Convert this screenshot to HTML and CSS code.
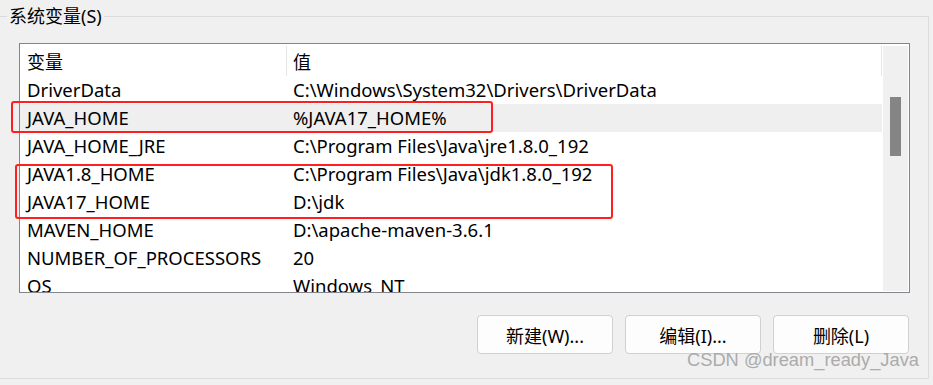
FILE: index.html
```html
<!DOCTYPE html>
<html lang="zh-CN">
<head>
<meta charset="utf-8">
<title>系统变量</title>
<link rel="stylesheet" href="styles.css">
</head>
<body>
<div class="window">
  <fieldset class="group">
    <legend class="group-title">系统变量(S)</legend>
    <div class="list">
      <div class="list-body">
        <div class="list-head">
          <div class="cell col-name head-cell">变量</div>
          <div class="cell col-value head-cell">值</div>
        </div>
        <div class="row"><div class="cell col-name">DriverData</div><div class="cell col-value">C:\Windows\System32\Drivers\DriverData</div></div>
        <div class="row selected"><div class="cell col-name">JAVA_HOME</div><div class="cell col-value">%JAVA17_HOME%</div></div>
        <div class="row"><div class="cell col-name">JAVA_HOME_JRE</div><div class="cell col-value">C:\Program Files\Java\jre1.8.0_192</div></div>
        <div class="row"><div class="cell col-name">JAVA1.8_HOME</div><div class="cell col-value">C:\Program Files\Java\jdk1.8.0_192</div></div>
        <div class="row"><div class="cell col-name">JAVA17_HOME</div><div class="cell col-value">D:\jdk</div></div>
        <div class="row"><div class="cell col-name">MAVEN_HOME</div><div class="cell col-value">D:\apache-maven-3.6.1</div></div>
        <div class="row"><div class="cell col-name">NUMBER_OF_PROCESSORS</div><div class="cell col-value">20</div></div>
        <div class="row"><div class="cell col-name">OS</div><div class="cell col-value">Windows_NT</div></div>
      </div>
      <div class="scrollbar"><div class="thumb"></div></div>
    </div>
    <div class="buttons">
      <button class="btn">新建(W)...</button>
      <button class="btn">编辑(I)...</button>
      <button class="btn">删除(L)</button>
    </div>
  </fieldset>
  <div class="mark mark-one"></div>
  <div class="mark mark-two"></div>
  <div class="watermark">CSDN @dream_ready_Java</div>
</div>
</body>
</html>
```
FILE: styles.css
```css
html, body {
  margin: 0;
  padding: 0;
  background: #f0f0f0;
}
body {
  font-family: "Noto Sans", "Noto Sans CJK SC", sans-serif;
  font-size: 18.5px;
  color: #000;
}
.window {
  position: relative;
  width: 933px;
  height: 385px;
  overflow: hidden;
}
.group {
  box-sizing: border-box;
  width: 929px;
  height: 379px;
  margin: 0;
  padding: 0;
  border: 1px solid #dcdcdc;
  border-left: none;
}
.group-title {
  margin-left: 7px;
  padding: 0 2px;
  line-height: 32px;
  font-size: 18px;
  color: #000;
}
.list {
  box-sizing: border-box;
  margin: 11px 0 0 19px;
  width: 891px;
  height: 250px;
  border: 1px solid #82868c;
  background: #fff;
  display: flex;
  overflow: hidden;
}
.list-body {
  width: 862px;
  height: 248px;
  overflow: hidden;
}
.list-head {
  display: flex;
  height: 32px;
  align-items: stretch;
  padding-top: 2px;
  box-sizing: border-box;
}
.cell {
  box-sizing: border-box;
  padding-left: 7px;
  padding-bottom: 1px;
  white-space: nowrap;
  display: flex;
  align-items: center;
}
.col-name { width: 267px; }
.col-value { width: 595px; padding-left: 6px; }
.head-cell { font-size: 18px; }
.head-cell.col-name { border-right: 1px solid #e5e5e5; }
.head-cell.col-value { border-right: 1px solid #e5e5e5; }
.row {
  display: flex;
  height: 28px;
}
.row.selected { background: #efefef; }
.scrollbar {
  margin: 2px 0 0 1px;
  width: 25px;
  height: 245px;
  background: #f0f0f0;
  display: flex;
  justify-content: center;
}
.thumb {
  margin-top: 51px;
  width: 11px;
  height: 59px;
  background: #858585;
}
.buttons {
  display: flex;
  justify-content: flex-end;
  gap: 12px;
  margin-top: 22px;
  padding-right: 19px;
}
.btn {
  box-sizing: border-box;
  width: 136px;
  height: 39px;
  background: #fdfdfe;
  border: 1px solid #d0d0d0;
  border-radius: 4px;
  font-family: "Noto Sans", "Noto Sans CJK SC", sans-serif;
  font-size: 18px;
  color: #000;
  padding: 0;
}
.mark {
  position: absolute;
  box-sizing: border-box;
  border: 2px solid #ff1f1f;
  border-radius: 3px;
}
.mark-one { left: 11px; top: 101px; width: 482px; height: 32px; }
.mark-two { left: 15px; top: 164px; width: 598px; height: 55px; }
.watermark {
  position: absolute;
  left: 687px;
  top: 348px;
  font-family: "Liberation Sans", Arial, sans-serif;
  font-size: 18.3px;
  line-height: 24px;
  color: #ababab;
  white-space: nowrap;
}
```
